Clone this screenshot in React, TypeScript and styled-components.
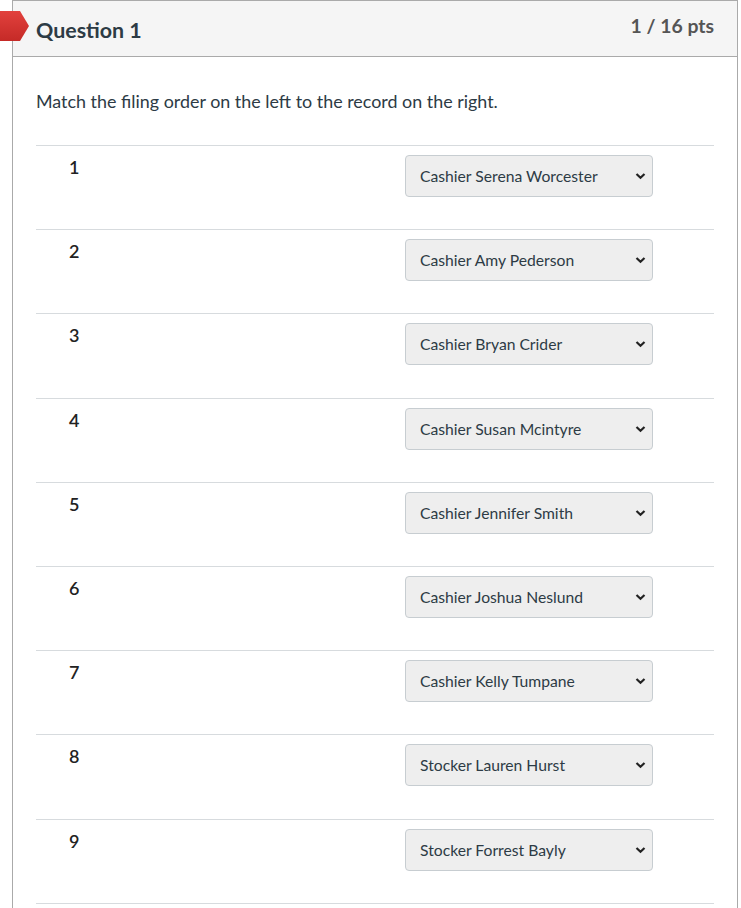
import React from "react";
import styled, { createGlobalStyle } from "styled-components";

const Global = createGlobalStyle`
  html, body { margin: 0; padding: 0; background: #ffffff; }
  body { font-family: Lato, "Open Sans", "Liberation Sans", sans-serif; color: #2d3b45; }
`;

const Page = styled.div`
  position: relative;
  width: 741px;
  height: 908px;
  overflow: hidden;
`;

const Panel = styled.section`
  position: relative;
  margin-left: 12px;
  width: 726px;
  box-sizing: border-box;
  border: 1px solid #aaaaaa;
  border-bottom: none;
  min-height: 908px;
`;

const Header = styled.header`
  display: flex;
  align-items: center;
  justify-content: space-between;
  height: 56px;
  box-sizing: border-box;
  padding: 0 23px 0 23px;
  background: #f5f5f5;
  border-bottom: 1px solid #aaaaaa;
`;

const Title = styled.h2`
  margin: 0;
  padding-top: 3px;
  font-size: 21.4px;
  font-weight: 700;
  color: #2d3b45;
`;

const Points = styled.div`
  font-size: 19.4px;
  font-weight: 700;
  color: #555555;
  padding-bottom: 6px;
`;

const Flag = styled.div`
  position: absolute;
  left: 0;
  top: 11px;
  width: 29px;
  height: 30px;
  background: linear-gradient(180deg, #e2413d 0%, #c52a27 100%);
  clip-path: polygon(0 0, 20px 0, 29px 50%, 20px 100%, 0 100%);
`;

const Body = styled.div`
  padding: 32px 23px 0 23px;
`;

const Prompt = styled.p`
  margin: 0 0 32px 0;
  font-size: 17.9px;
  line-height: 24px;
  color: #2d3b45;
`;

const Row = styled.div`
  display: grid;
  grid-template-columns: 369px 248px;
  border-top: 1px solid #d7dbde;
  height: 84.2px;
  box-sizing: border-box;
`;

const Num = styled.div`
  padding: 10px 0 0 33px;
  font-size: 18px;
  line-height: 22px;
  font-weight: 600;
  color: #222222;
`;

const SelectBox = styled.div`
  margin-top: 9px;
  height: 42px;
  box-sizing: border-box;
  border: 1px solid #c7cdd1;
  border-radius: 4px;
  background: #eeeeee;
  display: flex;
  align-items: center;
  justify-content: space-between;
  padding: 0 6px 0 14px;
  font-size: 15.7px;
  color: #2d3b45;
`;

const Chevron = () => (
  <svg width="11" height="8" viewBox="0 0 11 8">
    <path d="M1.5 2 L5.5 5.8 L9.5 2" fill="none" stroke="#222" strokeWidth="2.2" />
  </svg>
);

const items = [
  "Cashier Serena Worcester",
  "Cashier Amy Pederson",
  "Cashier Bryan Crider",
  "Cashier Susan Mcintyre",
  "Cashier Jennifer Smith",
  "Cashier Joshua Neslund",
  "Cashier Kelly Tumpane",
  "Stocker Lauren Hurst",
  "Stocker Forrest Bayly",
];

export default function App() {
  return (
    <Page>
      <Global />
      <Panel>
        <Header>
          <Title>Question 1</Title>
          <Points>1 / 16 pts</Points>
        </Header>
        <Body>
          <Prompt>Match the filing order on the left to the record on the right.</Prompt>
          {items.map((t, i) => (
            <Row key={i}>
              <Num>{i + 1}</Num>
              <SelectBox>
                <span>{t}</span>
                <Chevron />
              </SelectBox>
            </Row>
          ))}
          <Row />
        </Body>
      </Panel>
      <Flag />
    </Page>
  );
}
